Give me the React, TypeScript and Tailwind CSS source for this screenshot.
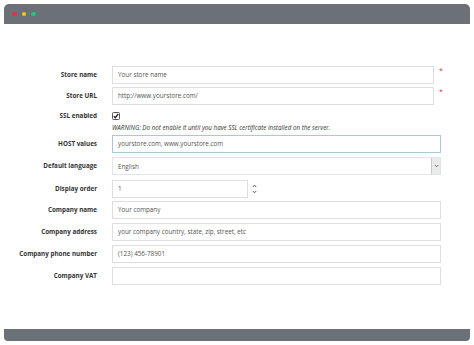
import React from "react";

const font = { fontFamily: '"Open Sans", "Noto Sans", sans-serif' };

function Label({ children }: { children: React.ReactNode }) {
  return (
    <div className="w-[93px] shrink-0 text-right text-[6.3px] font-bold text-[#333] leading-none">
      {children}
    </div>
  );
}

function Input({ value, width = "w-[322px]", border = "border-[#dedede]" }: { value: string; width?: string; border?: string }) {
  return (
    <div className={`h-[18px] ${width} border ${border} bg-white flex items-center px-[5px] text-[6.3px] text-[#555] leading-none`}>
      {value}
    </div>
  );
}

function Row({ label, children, mt = "mt-[4px]" }: { label: string; children: React.ReactNode; mt?: string }) {
  return (
    <div className={`flex items-center gap-[15px] ${mt}`}>
      <Label>{label}</Label>
      {children}
    </div>
  );
}

export default function App() {
  return (
    <div className="w-[474px] h-[345px] bg-white p-[4px] flex flex-col" style={font}>
      <div className="h-[20px] rounded-t-[5px] bg-[#6b7177] flex items-center pl-[8px] gap-[5px]">
        <div className="w-[4.5px] h-[4.5px] rounded-full bg-[#e0334a]" />
        <div className="w-[4.5px] h-[4.5px] rounded-full bg-[#f2c624]" />
        <div className="w-[4.5px] h-[4.5px] rounded-full bg-[#1ec87a]" />
      </div>
      <div className="flex flex-col pt-[42px]">
        <Row label="Store name" mt="mt-0">
          <Input value="Your store name" />
          <span className="self-start mt-[1px] ml-[-10px] text-[7px] text-[#d0394c] leading-none">*</span>
        </Row>
        <Row label="Store URL" mt="mt-[3px]">
          <Input value="http://www.yourstore.com/" />
          <span className="self-start mt-[1px] ml-[-10px] text-[7px] text-[#d0394c] leading-none">*</span>
        </Row>
        <div className="flex items-center gap-[15px] mt-[4px] h-[14px]">
          <Label>SSL enabled</Label>
          <svg width="8" height="8" viewBox="0 0 8 8">
            <rect x="0.5" y="0.5" width="7" height="7" rx="1" fill="#fff" stroke="#555" />
            <path d="M1.8 4.2 L3.3 5.7 L6.2 2" fill="none" stroke="#222" strokeWidth="1.3" />
          </svg>
        </div>
        <div className="pl-[108px] mt-[2px] text-[6.25px] italic text-[#333] leading-none">
          WARNING: Do not enable it until you have SSL certificate installed on the server.
        </div>
        <Row label="HOST values" mt="mt-[4px]">
          <Input value="yourstore.com, www.yourstore.com" width="w-[329px]" border="border-[#a9c9d8]" />
        </Row>
        <Row label="Default language">
          <div className="h-[18px] w-[329px] border border-[#dde6ea] flex items-stretch text-[6.3px] text-[#555]">
            <div className="flex-1 flex items-center px-[5px]">English</div>
            <div className="w-[9px] bg-[#eaeaea] border-l border-[#c8c8c8] flex items-center justify-center">
              <svg width="5" height="4" viewBox="0 0 5 4">
                <path d="M0.8 1 L2.5 2.8 L4.2 1" fill="none" stroke="#666" strokeWidth="0.9" />
              </svg>
            </div>
          </div>
        </Row>
        <Row label="Display order" mt="mt-[5px]">
          <div className="flex items-center">
            <Input value="1" width="w-[136px]" />
            <div className="flex flex-col items-center justify-center gap-[2px] w-[12px] h-[18px]">
              <svg width="5" height="4" viewBox="0 0 5 4">
                <path d="M0.8 3 L2.5 1.2 L4.2 3" fill="none" stroke="#444" strokeWidth="0.9" />
              </svg>
              <svg width="5" height="4" viewBox="0 0 5 4">
                <path d="M0.8 1 L2.5 2.8 L4.2 1" fill="none" stroke="#444" strokeWidth="0.9" />
              </svg>
            </div>
          </div>
        </Row>
        <Row label="Company name" mt="mt-[3px]">
          <Input value="Your company" width="w-[329px]" />
        </Row>
        <Row label="Company address">
          <Input value="your company country, state, zip, street, etc" width="w-[329px]" />
        </Row>
        <Row label="Company phone number">
          <Input value="(123) 456-78901" width="w-[329px]" />
        </Row>
        <Row label="Company VAT">
          <Input value="" width="w-[329px]" />
        </Row>
      </div>
      <div className="flex-1" />
      <div className="h-[12px] rounded-b-[4px] bg-[#6b7177]" />
    </div>
  );
}
